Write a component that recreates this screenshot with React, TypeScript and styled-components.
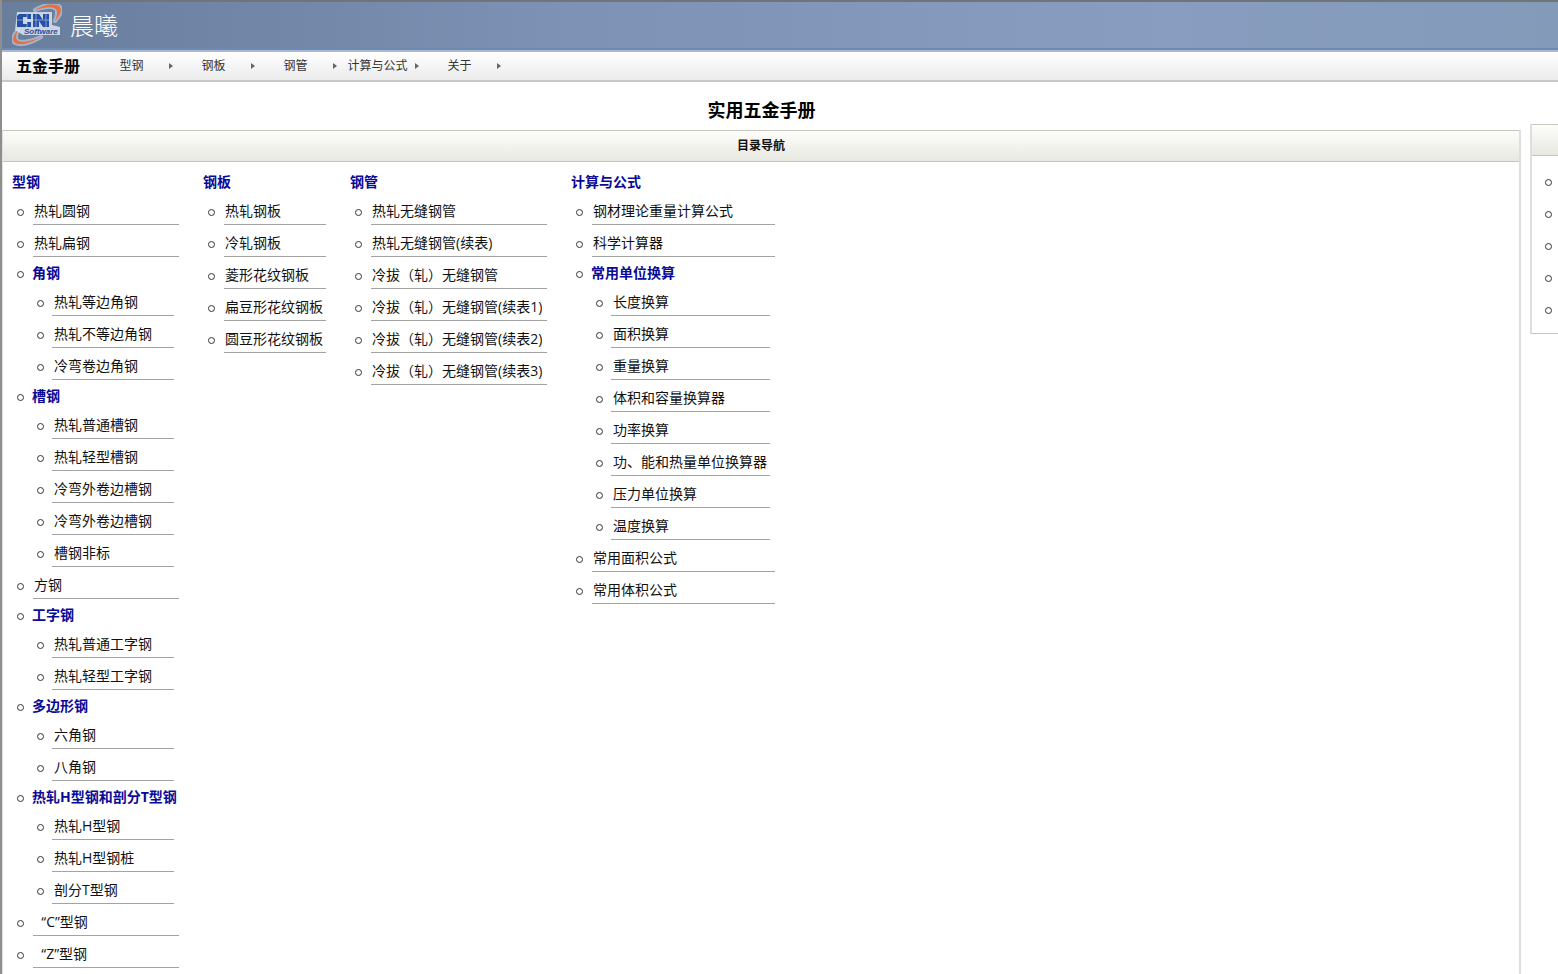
import React from "react";
import styled, { createGlobalStyle } from "styled-components";

const GlobalStyle = createGlobalStyle`
  *, *::before, *::after { box-sizing: border-box; }
  body {
    margin: 0;
    background: #fff;
    color: #111;
    font: 14px/20px "Open Sans", "Noto Sans CJK SC", sans-serif;
  }
  a { color: inherit; text-decoration: none; }
  ul { list-style: none; margin: 0; padding: 0; }
  h1, h2, h3 { margin: 0; }
`;

const Page = styled.div`
  display: flex;
  flex-direction: column;
  min-height: 100vh;
  overflow: hidden;
  border-left: 2px solid #8e8e8c;
`;

const Header = styled.header`
  display: flex;
  align-items: center;
  gap: 8px;
  height: 52px;
  padding-left: 10px;
  border-top: 2px solid #70757c;
  border-bottom: 2px solid #a9b9d1;
  background: linear-gradient(90deg, #697d9d 0%, #7c91b3 35%, #889dbf 75%, #839ab9 100%);
  box-shadow: inset 0 -2px 0 #6f8ab2;
`;

const Company = styled.span`
  color: #fff;
  font-size: 24px;
  line-height: 32px;
  font-weight: 300;
`;

const NavBar = styled.nav`
  display: flex;
  align-items: center;
  height: 30px;
  padding-left: 14px;
  border-bottom: 2px solid #c8c8c8;
  background: linear-gradient(#ffffff, #ebebeb);
`;

const Brand = styled.a`
  width: 78px;
  color: #000;
  font-size: 16px;
  font-weight: 700;
`;

const NavItems = styled.ul`
  display: flex;
  gap: 3px;
`;

const NavItem = styled.li`
  display: flex;
  align-items: center;
  width: 79px;
  &::after {
    content: "";
    border-left: 4px solid #666;
    border-top: 3px solid transparent;
    border-bottom: 3px solid transparent;
  }
`;

const NavLink = styled.a`
  flex: 1;
  color: #333;
  font-size: 12px;
  text-align: center;
`;

const Body = styled.div`
  display: grid;
  grid-template-columns: minmax(0, 1fr) 28px;
  column-gap: 9px;
  flex: 1;
`;

const Main = styled.main`
  display: flex;
  flex-direction: column;
`;

const Title = styled.h1`
  padding: 16px 0 8px;
  color: #000;
  font-size: 18px;
  line-height: 24px;
  text-align: center;
`;

const Panel = styled.section`
  flex: 1;
  border: solid #dedede;
  border-width: 0 2px 0 1px;
`;

const PanelHead = styled.h2`
  height: 32px;
  border: solid #c6c6ba;
  border-width: 1px 0;
  background: linear-gradient(#fdfdfb, #e8e8e1);
  color: #111;
  font-size: 12px;
  line-height: 30px;
  text-align: center;
`;

const Side = styled.aside`
  align-self: start;
  margin-top: 42px;
  border-left: 2px solid #dedede;
  border-bottom: 1px solid #c6c6ba;
`;

const SideList = styled.ul`
  padding: 7px 0 10px 8px;
`;

const Columns = styled.div`
  display: flex;
  gap: 24px;
  padding-left: 9px;
`;

const Column = styled.section<{ $width: number }>`
  flex: none;
  width: ${(p) => p.$width}px;
  white-space: nowrap;
`;

const Heading = styled.h3`
  padding: 10px 0 1px;
  color: #0a0a96;
  font-size: 14px;
  line-height: 20px;
`;

const Row = styled.li<{ $group?: boolean }>`
  display: grid;
  grid-template-columns: 20px minmax(0, 1fr);
  min-height: ${(p) => (p.$group ? 27 : 32)}px;
  &::before {
    content: "";
    width: 7px;
    height: 7px;
    margin: ${(p) => (p.$group ? 14 : 16)}px 0 0 5px;
    border: 1px solid #333;
    border-radius: 4px;
  }
`;

const Item = styled.a`
  display: block;
  margin-left: 1px;
  padding: 8px 0 3px 1px;
  border-bottom: 1px solid #a3a3a3;
`;

const GroupTitle = styled.a`
  display: block;
  padding: 6px 0 1px;
  color: #0a0a96;
  font-weight: 700;
`;

const SubList = styled.ul`
  margin-right: 5px;
  ${Item} {
    margin-left: 0;
    padding-left: 2px;
  }
`;

type Entry = string | { title: string; items: string[] };

const catalogue: { title: string; width: number; entries: Entry[] }[] = [
  {
    title: "型钢",
    width: 167,
    entries: [
      "热轧圆钢",
      "热轧扁钢",
      { title: "角钢", items: ["热轧等边角钢", "热轧不等边角钢", "冷弯卷边角钢"] },
      { title: "槽钢", items: ["热轧普通槽钢", "热轧轻型槽钢", "冷弯外卷边槽钢", "冷弯外卷边槽钢", "槽钢非标"] },
      "方钢",
      { title: "工字钢", items: ["热轧普通工字钢", "热轧轻型工字钢"] },
      { title: "多边形钢", items: ["六角钢", "八角钢"] },
      { title: "热轧H型钢和剖分T型钢", items: ["热轧H型钢", "热轧H型钢桩", "剖分T型钢"] },
      "\u00a0\u00a0“C”型钢",
      "\u00a0\u00a0“Z”型钢",
    ],
  },
  {
    title: "钢板",
    width: 123,
    entries: ["热轧钢板", "冷轧钢板", "菱形花纹钢板", "扁豆形花纹钢板", "圆豆形花纹钢板"],
  },
  {
    title: "钢管",
    width: 197,
    entries: [
      "热轧无缝钢管",
      "热轧无缝钢管(续表)",
      "冷拔（轧）无缝钢管",
      "冷拔（轧）无缝钢管(续表1)",
      "冷拔（轧）无缝钢管(续表2)",
      "冷拔（轧）无缝钢管(续表3)",
    ],
  },
  {
    title: "计算与公式",
    width: 204,
    entries: [
      "钢材理论重量计算公式",
      "科学计算器",
      {
        title: "常用单位换算",
        items: [
          "长度换算",
          "面积换算",
          "重量换算",
          "体积和容量换算器",
          "功率换算",
          "功、能和热量单位换算器",
          "压力单位换算",
          "温度换算",
        ],
      },
      "常用面积公式",
      "常用体积公式",
    ],
  },
];

const menu = ["型钢", "钢板", "钢管", "计算与公式", "关于"];

function Logo() {
  return (
    <svg width="50" height="44" viewBox="0 0 50 44" fill="none" aria-hidden="true">
      <g stroke="#d5deec" strokeOpacity="0.55" strokeWidth="4" strokeLinejoin="round">
        <path d="M23 6C33 0 44-1 48 3c2 4 0 9-5 14 2-5 3-9 1-12-4-3-12-2-21 1z" />
        <path d="M6 26C1 31 0 37 3 39c6 3 16 0 26-6-9 4-19 6-23 4-3-2-2-7 0-11z" />
      </g>
      <path d="M5 8h35v13l8 2v8H11l-8-5z" fill="#dbe3f0" fillOpacity="0.85" />
      <path d="M23 6C33 0 44-1 48 3c2 4 0 9-5 14 2-5 3-9 1-12-4-3-12-2-21 1z" fill="#ea6f3e" />
      <path d="M6 26C1 31 0 37 3 39c6 3 16 0 26-6-9 4-19 6-23 4-3-2-2-7 0-11z" fill="#ea6f3e" />
      <g fill="#2450a8">
        <path d="M7 10h12v5h-4v-2h-4v7h4v-2h4v5H5V12z" />
        <path d="M21 10h6l4 6v-6h6v13h-6l-4-6v6h-6z" />
      </g>
      <path d="M5 16h33M15 10v13M24 10v13M34 10v13" stroke="#dbe3f0" strokeOpacity="0.5" />
      <text x="12" y="30" fill="#2f4f96" fontSize="8" fontWeight="700" fontStyle="italic" fontFamily="Liberation Sans, sans-serif">
        Software
      </text>
    </svg>
  );
}

function EntryRow({ entry }: { entry: Entry }) {
  if (typeof entry === "string") {
    return (
      <Row>
        <Item href="#">{entry}</Item>
      </Row>
    );
  }
  return (
    <Row $group>
      <div>
        <GroupTitle href="#">{entry.title}</GroupTitle>
        <SubList>
          {entry.items.map((item, i) => (
            <EntryRow key={i} entry={item} />
          ))}
        </SubList>
      </div>
    </Row>
  );
}

export default function App() {
  return (
    <>
      <GlobalStyle />
      <Page>
        <Header>
          <Logo />
          <Company>晨曦</Company>
        </Header>
        <NavBar>
          <Brand href="#">五金手册</Brand>
          <NavItems>
            {menu.map((label) => (
              <NavItem key={label}>
                <NavLink href="#">{label}</NavLink>
              </NavItem>
            ))}
          </NavItems>
        </NavBar>
        <Body>
          <Main>
            <Title>实用五金手册</Title>
            <Panel>
              <PanelHead>目录导航</PanelHead>
              <Columns>
                {catalogue.map((column) => (
                  <Column key={column.title} $width={column.width}>
                    <Heading>{column.title}</Heading>
                    <ul>
                      {column.entries.map((entry, i) => (
                        <EntryRow key={i} entry={entry} />
                      ))}
                    </ul>
                  </Column>
                ))}
              </Columns>
            </Panel>
          </Main>
          <Side>
            <PanelHead as="div" />
            <SideList>
              {[0, 1, 2, 3, 4].map((i) => (
                <Row key={i} />
              ))}
            </SideList>
          </Side>
        </Body>
      </Page>
    </>
  );
}
